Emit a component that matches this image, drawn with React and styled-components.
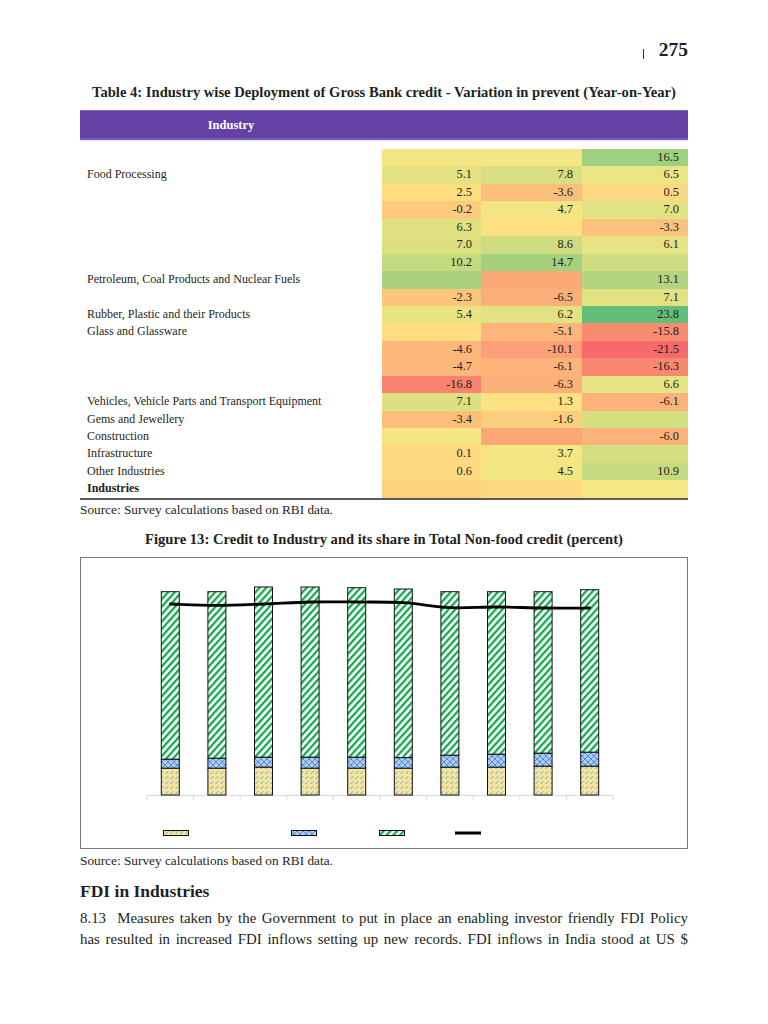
import React from "react";
import styled, { createGlobalStyle } from "styled-components";

const GlobalStyle = createGlobalStyle`
  body {
    margin: 0;
    background: #ffffff;
    font-family: "Liberation Serif", "Times New Roman", serif;
    color: #231f20;
  }
`;

const rows = [
  { label: "", cells: [["", "#f4e683"], ["", "#f4e683"], ["16.5", "#9fd07e"]] },
  { label: "Food Processing", cells: [["5.1", "#e4e282"], ["7.8", "#d9df81"], ["6.5", "#ebe583"]] },
  { label: "", cells: [["2.5", "#fedd81"], ["-3.6", "#fcbf7b"], ["0.5", "#fed880"]] },
  { label: "", cells: [["-0.2", "#fdcb7d"], ["4.7", "#f1e683"], ["7.0", "#e3e282"]] },
  { label: "", cells: [["6.3", "#e0e282"], ["", "#fee082"], ["-3.3", "#fcc27c"]] },
  { label: "", cells: [["7.0", "#dce081"], ["8.6", "#cddd80"], ["6.1", "#e6e383"]] },
  { label: "", cells: [["10.2", "#c5db80"], ["14.7", "#a5d17e"], ["", "#d0de81"]] },
  { label: "Petroleum, Coal Products and Nuclear Fuels", cells: [["", "#a8d27f"], ["", "#fbaa77"], ["13.1", "#b3d57f"]] },
  { label: "", cells: [["-2.3", "#fdc47c"], ["-6.5", "#fbaf78"], ["7.1", "#e2e282"]] },
  { label: "Rubber, Plastic and their Products", cells: [["5.4", "#e8e482"], ["6.2", "#e3e282"], ["23.8", "#63be7b"]] },
  { label: "Glass and Glassware", cells: [["", "#fede81"], ["-5.1", "#fcb679"], ["-15.8", "#f98b71"]] },
  { label: "", cells: [["-4.6", "#fcb87a"], ["-10.1", "#fba076"], ["-21.5", "#f8696b"]] },
  { label: "", cells: [["-4.7", "#fcb87a"], ["-6.1", "#fcb279"], ["-16.3", "#f98870"]] },
  { label: "", cells: [["-16.8", "#f98370"], ["-6.3", "#fcb179"], ["6.6", "#e5e382"]] },
  { label: "Vehicles, Vehicle Parts and Transport Equipment", cells: [["7.1", "#dde081"], ["1.3", "#fee182"], ["-6.1", "#fcb279"]] },
  { label: "Gems and Jewellery", cells: [["-3.4", "#fdbf7b"], ["-1.6", "#fdcd7e"], ["", "#d4df81"]] },
  { label: "Construction", cells: [["", "#f4e683"], ["", "#fba877"], ["-6.0", "#fcb379"]] },
  { label: "Infrastructure", cells: [["0.1", "#fed981"], ["3.7", "#f4e683"], ["", "#d5df81"]] },
  { label: "Other Industries", cells: [["0.6", "#fed981"], ["4.5", "#f2e683"], ["10.9", "#c6db80"]] },
  { label: "Industries", bold: true, cells: [["", "#fdd27f"], ["", "#fed980"], ["", "#f5e784"]] },
];

// bars in page coordinates: green top, blue top, yellow top
const bars = [
  [591.7, 759.3, 768.3],
  [591.7, 758.3, 768.3],
  [587, 757.3, 767.3],
  [587, 757.3, 768.3],
  [587.7, 757.3, 768.3],
  [589, 757.7, 768.3],
  [591.7, 755.3, 767.3],
  [591.7, 754.3, 767.3],
  [591.7, 753.3, 766.3],
  [589.7, 752.3, 766.3],
];
const lineY = [604, 605.3, 604, 602, 602, 602.7, 607.7, 607, 608, 608];
const AXIS_Y = 795;
const AXIS_X0 = 147;
const STEP = 46.6;
const BAR_W = 18;

const smoothPath = (pts) => {
  let d = `M${pts[0][0]},${pts[0][1]}`;
  for (let i = 0; i < pts.length - 1; i++) {
    const p0 = pts[i - 1] || pts[i];
    const p1 = pts[i];
    const p2 = pts[i + 1];
    const p3 = pts[i + 2] || p2;
    const c1x = p1[0] + (p2[0] - p0[0]) / 6;
    const c1y = p1[1] + (p2[1] - p0[1]) / 6;
    const c2x = p2[0] - (p3[0] - p1[0]) / 6;
    const c2y = p2[1] - (p3[1] - p1[1]) / 6;
    d += ` C${c1x},${c1y} ${c2x},${c2y} ${p2[0]},${p2[1]}`;
  }
  return d;
};

const Chart = () => {
  const centers = bars.map((_, i) => AXIS_X0 + STEP * (i + 0.5));
  const line = smoothPath(centers.map((x, i) => [x, lineY[i]]));
  return (
    <svg width="606" height="290" viewBox="81 558 606 290">
      <defs>
        <pattern id="green" patternUnits="userSpaceOnUse" width="5" height="8" patternTransform="rotate(42)">
          <rect width="5" height="8" fill="#ffffff" />
          <rect width="2.3" height="8" fill="#12a84c" />
        </pattern>
        <pattern id="blue" patternUnits="userSpaceOnUse" width="6" height="6">
          <rect width="6" height="6" fill="#aecbef" />
          <path d="M0,0 L6,6 M0,6 L6,0" stroke="#3c7ed0" strokeWidth="0.8" fill="none" />
        </pattern>
        <pattern id="yellow" patternUnits="userSpaceOnUse" width="5" height="5">
          <rect width="5" height="5" fill="#fbe49a" />
          <path d="M0.5,4 L3.2,1.3" stroke="#38b2e6" strokeWidth="1" fill="none" />
        </pattern>
      </defs>
      <line x1={AXIS_X0} y1={AXIS_Y + 0.5} x2={AXIS_X0 + STEP * 10} y2={AXIS_Y + 0.5} stroke="#d9d9d9" strokeWidth="1" />
      {Array.from({ length: 11 }).map((_, i) => (
        <line
          key={i}
          x1={AXIS_X0 + STEP * i}
          y1={AXIS_Y}
          x2={AXIS_X0 + STEP * i}
          y2={AXIS_Y + 5}
          stroke="#d9d9d9"
          strokeWidth="1"
        />
      ))}
      {bars.map(([g, b, y], i) => {
        const x = centers[i] - BAR_W / 2;
        return (
          <g key={i} stroke="#111" strokeWidth="1">
            <rect x={x} y={g} width={BAR_W} height={b - g} fill="url(#green)" />
            <rect x={x} y={b} width={BAR_W} height={y - b} fill="url(#blue)" />
            <rect x={x} y={y} width={BAR_W} height={AXIS_Y - y} fill="url(#yellow)" />
          </g>
        );
      })}
      <path d={line} fill="none" stroke="#000" strokeWidth="2.8" strokeLinecap="round" />
      <g stroke="#111" strokeWidth="1">
        <rect x="163.5" y="830.5" width="25" height="5" fill="url(#yellow)" />
        <rect x="291.5" y="830.5" width="25" height="5" fill="url(#blue)" />
        <rect x="379.5" y="830.5" width="25" height="5" fill="url(#green)" />
      </g>
      <line x1="455" y1="833" x2="481" y2="833" stroke="#000" strokeWidth="3" />
    </svg>
  );
};

export default function App() {
  return (
    <>
      <GlobalStyle />
      <Page>
        <PageHead>
          <Divider />
          <PageNo>275</PageNo>
        </PageHead>
        <Caption>
          Table 4: Industry wise Deployment of Gross Bank credit - Variation in prevent (Year-on-Year)
        </Caption>
        <Table>
          <HeadRow>
            <HeadCell>Industry</HeadCell>
          </HeadRow>
          <Spacer />
          {rows.map((r, i) => (
            <Row key={i}>
              <Label $bold={r.bold}>{r.label}</Label>
              {r.cells.map(([v, bg], j) => (
                <Num key={j} $bg={bg}>
                  {v}
                </Num>
              ))}
            </Row>
          ))}
        </Table>
        <Source>Source: Survey calculations based on RBI data.</Source>
        <FigCaption>Figure 13: Credit to Industry and its share in Total Non-food credit (percent)</FigCaption>
        <ChartBox>
          <Chart />
        </ChartBox>
        <Source $top={5}>Source: Survey calculations based on RBI data.</Source>
        <Heading>FDI in Industries</Heading>
        <Para>
          8.13&nbsp; Measures taken by the Government to put in place an enabling investor friendly FDI Policy
          <br />
          has resulted in increased FDI inflows setting up new records. FDI inflows in India stood at US $
        </Para>
      </Page>
    </>
  );
}

const Page = styled.div`
  width: 608px;
  padding: 39px 80px 40px;
`;

const PageHead = styled.div`
  display: flex;
  justify-content: flex-end;
  align-items: center;
  height: 22px;
`;

const Divider = styled.span`
  width: 1px;
  height: 10px;
  background: #333;
  margin: 8px 15px 0 0;
`;

const PageNo = styled.span`
  font-size: 19.5px;
  font-weight: bold;
  line-height: 22px;
`;

const Caption = styled.div`
  margin-top: 22px;
  text-align: center;
  font-size: 14.6px;
  font-weight: bold;
  line-height: 18px;
  white-space: nowrap;
`;

const Table = styled.div`
  margin-top: 9px;
  border-bottom: 2px solid #5a5a5a;
`;

const HeadRow = styled.div`
  display: grid;
  grid-template-columns: 302px 1fr;
  height: 30px;
  background: #6441a5;
  box-shadow: inset 0 1px 0 #8468bb, inset 0 -2px 0 #7a5cb8;
`;

const HeadCell = styled.div`
  color: #ffffff;
  font-weight: bold;
  font-size: 12.5px;
  display: flex;
  align-items: center;
  justify-content: center;
`;

const Spacer = styled.div`
  height: 9px;
  border-top: 1px solid #e6e1f2;
  box-sizing: border-box;
`;

const Row = styled.div`
  display: grid;
  grid-template-columns: 302px 99px 101px 106px;
  height: 17.45px;
  font-size: 12px;
  line-height: 17.45px;
`;

const Label = styled.div`
  padding-left: 7px;
  white-space: nowrap;
  font-weight: ${(p) => (p.$bold ? "bold" : "normal")};
`;

const Num = styled.div`
  background: ${(p) => p.$bg};
  text-align: right;
  padding-right: 9px;
  font-size: 12.4px;
`;

const Source = styled.div`
  margin-top: ${(p) => (p.$top ? p.$top : 3)}px;
  font-size: 13.3px;
  line-height: 14px;
`;

const FigCaption = styled(Caption)`
  margin-top: 13px;
`;

const ChartBox = styled.div`
  margin-top: 9px;
  height: 290px;
  border: 1px solid #7a7a7a;
  display: flex;
`;

const Heading = styled.h3`
  margin: 13px 0 0;
  font-size: 17.5px;
  font-weight: bold;
  line-height: 20px;
`;

const Para = styled.p`
  margin: 7px 0 0;
  font-size: 14.9px;
  line-height: 21px;
  text-align: justify;
  text-align-last: justify;
`;
